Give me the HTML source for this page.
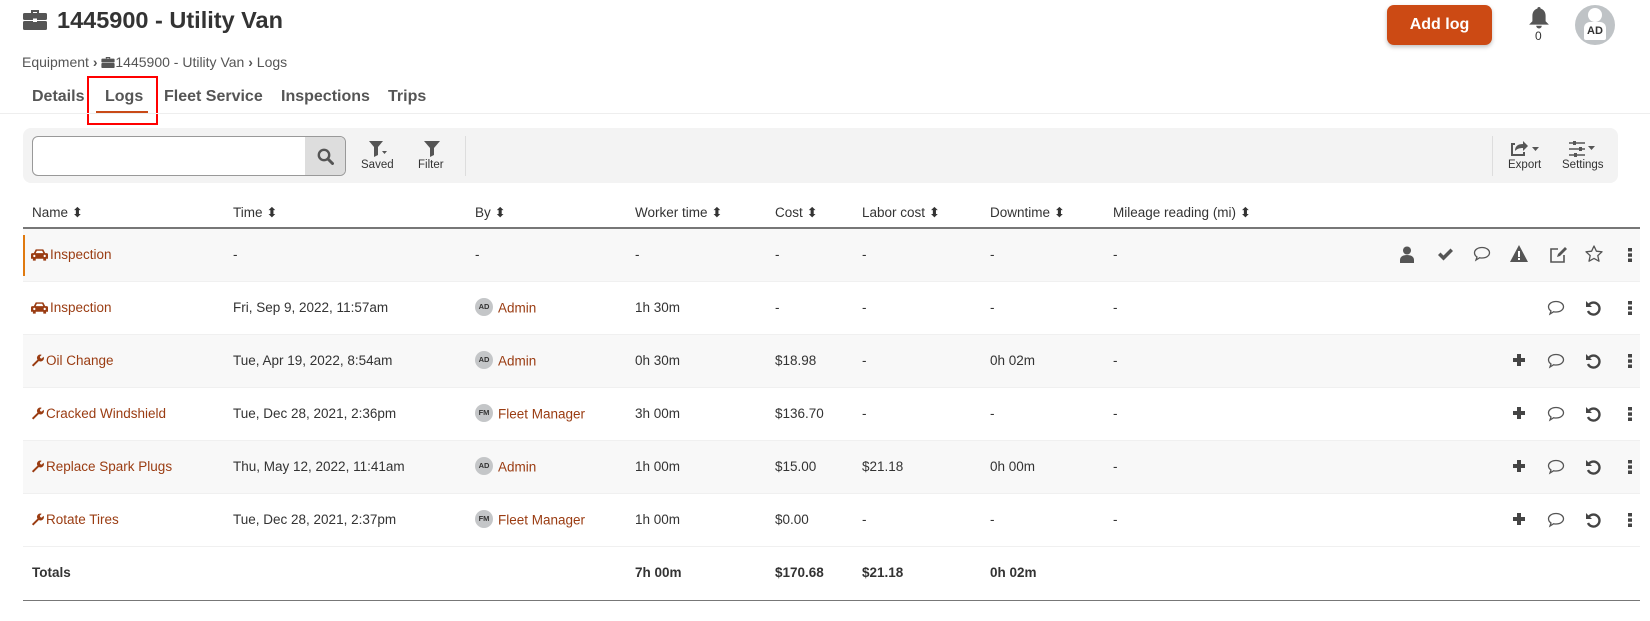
<!DOCTYPE html>
<html><head><meta charset="utf-8"><style>
*{box-sizing:border-box;margin:0;padding:0}
body{width:1650px;height:621px;background:#fff;font-family:"Liberation Sans",Arial,sans-serif;color:#333;position:relative;overflow:hidden}
.a{position:absolute}
.row{position:absolute;left:23px;width:1617px;height:53px;border-bottom:1px solid #f0f0f0}
.row span{position:absolute;top:18px;font-size:13.5px;color:#333;white-space:nowrap}
.row span.l{color:#9a3c12}
.hd span{position:absolute;top:205px;font-size:13.5px;color:#333;white-space:nowrap}
.av{display:inline-block;width:18px;height:18px;border-radius:50%;background:#c4c6c8;color:#333;font-size:7.5px;font-weight:bold;text-align:center;line-height:18px;vertical-align:middle;position:relative;top:-2px;margin-right:5px;font-style:normal}
.ic{position:absolute;top:18px}
.tab{position:absolute;top:88px;font-size:16px;color:#555;font-weight:bold}
</style></head><body>
<!-- title -->
<svg class="a" style="left:23px;top:10px" width="24" height="20" viewBox="0 0 24 20"><path d="M8 0h8v3h-2V2h-4v1H8z" fill="#555"/><rect x="0" y="3" width="24" height="7" rx="1.5" fill="#555"/><rect x="0" y="11" width="24" height="9" rx="1.5" fill="#555"/><rect x="10" y="8.5" width="4" height="3.5" fill="#fff"/></svg>
<div class="a" style="left:57px;top:7px;font-size:23.5px;font-weight:bold;color:#333">1445900 - Utility Van</div>
<div class="a" style="left:1387px;top:5px;width:105px;height:40px;background:#cc4a14;border-radius:7px;color:#fff;font-weight:bold;font-size:16px;text-align:center;line-height:40px;box-shadow:0 2px 4px rgba(0,0,0,.25)">Add log</div>
<svg class="a" style="left:1529px;top:7px" width="20" height="22" viewBox="0 0 18 20"><path d="M9 0c1 0 1.5.7 1.5 1.5C13.5 2.3 15 5 15 8v5l3 3H0l3-3V8c0-3 1.5-5.7 4.5-6.5C7.5.7 8 0 9 0z" fill="#555"/><path d="M6.5 17h5a2.5 2.5 0 0 1-5 0z" fill="#555"/></svg>
<div class="a" style="left:1535px;top:29px;font-size:12px;color:#333">0</div>
<div class="a" style="left:1575px;top:5px;width:40px;height:40px;border-radius:50%;background:#bfc3c6;overflow:hidden">
<div class="a" style="left:13px;top:3px;width:14px;height:14px;border-radius:50%;background:#fff"></div>
<div class="a" style="left:9px;top:17px;width:22px;height:18px;border-radius:6px 6px 2px 2px;background:#fff;font-size:11px;font-weight:bold;color:#333;text-align:center;line-height:18px">AD</div></div>
<!-- breadcrumb -->
<div class="a" style="left:22px;top:54px;font-size:14px;color:#555;white-space:nowrap">Equipment <b style="font-size:14px">&#x203A;</b> <svg width="14" height="11" viewBox="0 0 24 20" style="vertical-align:-1px"><path d="M8 0h8v3h-2V2h-4v1H8z" fill="#555"/><rect y="3" width="24" height="7" rx="1.5" fill="#555"/><rect y="11" width="24" height="9" rx="1.5" fill="#555"/></svg>1445900 - Utility Van <b style="font-size:14px">&#x203A;</b> Logs</div>
<!-- tabs -->
<div class="tab" style="left:32px">Details</div>
<div class="tab" style="left:105px">Logs</div>
<div class="tab" style="left:164px">Fleet Service</div>
<div class="tab" style="left:281px">Inspections</div>
<div class="tab" style="left:388px">Trips</div>
<div class="a" style="left:96px;top:111px;width:52px;height:2px;background:#c94a17"></div>
<div class="a" style="left:87px;top:76px;width:71px;height:49px;border:2px solid #f00"></div>
<div class="a" style="left:0;top:113px;width:1650px;height:1px;background:#eee"></div>
<!-- toolbar -->
<div class="a" style="left:23px;top:128px;width:1595px;height:55px;background:#f3f3f3;border-radius:8px"></div>
<div class="a" style="left:32px;top:136px;width:314px;height:40px;background:#fff;border:1px solid #999;border-radius:6px;overflow:hidden"><div class="a" style="right:0;top:0;width:40px;height:40px;background:#ddd"></div>
<svg class="a" style="right:11px;top:11px" width="17" height="17" viewBox="0 0 17 17"><circle cx="7" cy="7" r="5.2" fill="none" stroke="#555" stroke-width="2.4"/><path d="M11 11l4.5 4.5" stroke="#555" stroke-width="3" stroke-linecap="round"/></svg></div>
<svg class="a" style="left:369px;top:141px" width="19" height="16" viewBox="0 0 19 16"><path d="M0 0h14l-5 6v8l-4 2V6z" fill="#555"/><path d="M13 10h5l-2.5 3z" fill="#555"/></svg>
<div class="a" style="left:361px;top:159px;font-size:11.5px;color:#333">Saved</div>
<svg class="a" style="left:424px;top:141px" width="16" height="16" viewBox="0 0 16 16"><path d="M0 0h16l-6 7v7l-4 2V7z" fill="#555"/></svg>
<div class="a" style="left:418px;top:159px;font-size:11.5px;color:#333">Filter</div>
<div class="a" style="left:465px;top:136px;width:1px;height:40px;background:#ddd"></div>
<div class="a" style="left:1492px;top:136px;width:1px;height:40px;background:#ddd"></div>
<svg class="a" style="left:1509px;top:139px" width="32" height="18" viewBox="0 0 32 18"><path d="M2 4h4v2H4v9h10v-2h2v4H2z" fill="#555"/><path d="M6 12c0-5 3-7 8-7V2l5 5-5 5V9c-4 0-6 1-8 3z" fill="#555"/><path d="M23 8h7l-3.5 4z" fill="#555"/></svg>
<div class="a" style="left:1508px;top:159px;font-size:11.5px;color:#333">Export</div>
<svg class="a" style="left:1569px;top:140px" width="34" height="18" viewBox="0 0 34 18"><path d="M0 3h16M0 9h16M0 15h16" stroke="#555" stroke-width="1.5"/><rect x="4" y="1" width="3" height="4" fill="#555"/><rect x="10" y="7" width="3" height="4" fill="#555"/><rect x="5" y="13" width="3" height="4" fill="#555"/><path d="M19 6h7l-3.5 4z" fill="#555"/></svg>
<div class="a" style="left:1562px;top:159px;font-size:11.5px;color:#333">Settings</div>
<!-- header -->
<div class="hd">
<span style="left:32px">Name &#x2B0D;</span><span style="left:233px">Time &#x2B0D;</span><span style="left:475px">By &#x2B0D;</span><span style="left:635px">Worker time &#x2B0D;</span><span style="left:775px">Cost &#x2B0D;</span><span style="left:862px">Labor cost &#x2B0D;</span><span style="left:990px">Downtime &#x2B0D;</span><span style="left:1113px">Mileage reading (mi) &#x2B0D;</span>
</div>
<div class="a" style="left:23px;top:227px;width:1617px;height:2px;background:#777"></div>

<svg width="0" height="0" style="position:absolute"><defs>
<symbol id="car" viewBox="0 0 18 14"><path d="M3 5l2-4h8l2 4h1.5a1.5 1.5 0 0 1 1.5 1.5V11h-2v2h-3v-2H5v2H2v-2H0V6.5A1.5 1.5 0 0 1 1.5 5z" fill="#9a3c12"/><path d="M5 5l1.2-2.5h5.6L13 5z" fill="#fff"/><circle cx="3.5" cy="8" r="1.2" fill="#fff"/><circle cx="14.5" cy="8" r="1.2" fill="#fff"/></symbol>
<symbol id="wr" viewBox="0 0 14 14"><path d="M1 12l6-6a3.5 3.5 0 0 1 4.5-5L9.5 3l.5 1.5 1.5.5 2-2a3.5 3.5 0 0 1-5 4.5l-6 6z" fill="#9a3c12"/></symbol>
<symbol id="cm" viewBox="0 0 18 16"><path d="M9 1.5c4.3 0 7.5 2.4 7.5 5.3S13.3 12 9 12c-.8 0-1.6-.1-2.3-.3L3 14l1-3C2.5 10 1.5 8.5 1.5 6.8 1.5 3.9 4.7 1.5 9 1.5z" fill="none" stroke="#555" stroke-width="1.3"/></symbol>
<symbol id="un" viewBox="0 0 16 16"><path d="M4 4.5A6 6 0 1 1 3 11" fill="none" stroke="#444" stroke-width="2.4"/><path d="M1 1v6h6z" fill="#444"/></symbol>
<symbol id="pl" viewBox="0 0 14 14"><path d="M5 1h4v4h4v4H9v4H5V9H1V5h4z" fill="#444"/></symbol>
<symbol id="dt" viewBox="0 0 6 16"><rect x="1" y="1" width="4" height="3.5" fill="#444"/><rect x="1" y="6.3" width="4" height="3.5" fill="#444"/><rect x="1" y="11.5" width="4" height="3.5" fill="#444"/></symbol>
</defs></svg>

<!-- row1 -->
<div class="row" style="top:229px;background:#f8f8f8"><div class="a" style="left:0;top:6px;width:2px;height:41px;background:#e07a10"></div>
<svg class="ic" style="left:8px;top:19px" width="17" height="14"><use href="#car"/></svg><span class="l" style="left:27px">Inspection</span>
<span style="left:210px">-</span><span style="left:452px">-</span><span style="left:612px">-</span><span style="left:752px">-</span><span style="left:839px">-</span><span style="left:967px">-</span><span style="left:1090px">-</span>
<svg class="ic" style="left:1377px;top:17px" width="14" height="17" viewBox="0 0 14 17"><circle cx="7" cy="4.5" r="4" fill="#555"/><path d="M0 17v-3c0-3 2.5-5 7-5s7 2 7 5v3z" fill="#555"/></svg>
<svg class="ic" style="left:1414px;top:19px" width="17" height="13" viewBox="0 0 17 13"><path d="M1 7l2.5-2.5L6.5 7.5 13.5.5 16 3 6.5 12.5z" fill="#555"/></svg>
<svg class="ic" style="left:1450px;top:17px" width="18" height="16"><use href="#cm"/></svg>
<svg class="ic" style="left:1487px;top:16px" width="18" height="17" viewBox="0 0 18 17"><path d="M9 0l9 17H0z" fill="#555"/><rect x="8" y="6" width="2" height="6" fill="#fff"/><rect x="8" y="13" width="2" height="2" fill="#fff"/></svg>
<svg class="ic" style="left:1526px;top:17px" width="18" height="17" viewBox="0 0 18 17"><path d="M9 3H2v13h13V9" fill="none" stroke="#555" stroke-width="1.6"/><path d="M8 11l1-3 7-7 2 2-7 7z" fill="#555"/></svg>
<svg class="ic" style="left:1562px;top:16px" width="18" height="18" viewBox="0 0 18 18"><path d="M9 1l2.4 5.2 5.6.6-4.2 3.8 1.2 5.6L9 13.4l-5 2.8 1.2-5.6L1 6.8l5.6-.6z" fill="none" stroke="#555" stroke-width="1.3" stroke-linejoin="round"/></svg>
<svg class="ic" style="left:1604px;top:18px" width="6" height="16"><use href="#dt"/></svg>
</div>
<!-- row2 -->
<div class="row" style="top:282px"><svg class="ic" style="left:8px;top:19px" width="17" height="14"><use href="#car"/></svg><span class="l" style="left:27px">Inspection</span>
<span style="left:210px">Fri, Sep 9, 2022, 11:57am</span><span class="l" style="left:452px"><i class="av">AD</i>Admin</span><span style="left:612px">1h 30m</span><span style="left:752px">-</span><span style="left:839px">-</span><span style="left:967px">-</span><span style="left:1090px">-</span>
<svg class="ic" style="left:1524px" width="18" height="16"><use href="#cm"/></svg><svg class="ic" style="left:1562px" width="16" height="16"><use href="#un"/></svg><svg class="ic" style="left:1604px" width="6" height="16"><use href="#dt"/></svg></div>
<!-- row3 -->
<div class="row" style="top:335px;background:#f8f8f8"><svg class="ic" style="left:8px;top:19px" width="13" height="13"><use href="#wr"/></svg><span class="l" style="left:23px">Oil Change</span>
<span style="left:210px">Tue, Apr 19, 2022, 8:54am</span><span class="l" style="left:452px"><i class="av">AD</i>Admin</span><span style="left:612px">0h 30m</span><span style="left:752px">$18.98</span><span style="left:839px">-</span><span style="left:967px">0h 02m</span><span style="left:1090px">-</span>
<svg class="ic" style="left:1489px" width="14" height="14"><use href="#pl"/></svg><svg class="ic" style="left:1524px" width="18" height="16"><use href="#cm"/></svg><svg class="ic" style="left:1562px" width="16" height="16"><use href="#un"/></svg><svg class="ic" style="left:1604px" width="6" height="16"><use href="#dt"/></svg></div>
<!-- row4 -->
<div class="row" style="top:388px"><svg class="ic" style="left:8px;top:19px" width="13" height="13"><use href="#wr"/></svg><span class="l" style="left:23px">Cracked Windshield</span>
<span style="left:210px">Tue, Dec 28, 2021, 2:36pm</span><span class="l" style="left:452px"><i class="av">FM</i>Fleet Manager</span><span style="left:612px">3h 00m</span><span style="left:752px">$136.70</span><span style="left:839px">-</span><span style="left:967px">-</span><span style="left:1090px">-</span>
<svg class="ic" style="left:1489px" width="14" height="14"><use href="#pl"/></svg><svg class="ic" style="left:1524px" width="18" height="16"><use href="#cm"/></svg><svg class="ic" style="left:1562px" width="16" height="16"><use href="#un"/></svg><svg class="ic" style="left:1604px" width="6" height="16"><use href="#dt"/></svg></div>
<!-- row5 -->
<div class="row" style="top:441px;background:#f8f8f8"><svg class="ic" style="left:8px;top:19px" width="13" height="13"><use href="#wr"/></svg><span class="l" style="left:23px">Replace Spark Plugs</span>
<span style="left:210px">Thu, May 12, 2022, 11:41am</span><span class="l" style="left:452px"><i class="av">AD</i>Admin</span><span style="left:612px">1h 00m</span><span style="left:752px">$15.00</span><span style="left:839px">$21.18</span><span style="left:967px">0h 00m</span><span style="left:1090px">-</span>
<svg class="ic" style="left:1489px" width="14" height="14"><use href="#pl"/></svg><svg class="ic" style="left:1524px" width="18" height="16"><use href="#cm"/></svg><svg class="ic" style="left:1562px" width="16" height="16"><use href="#un"/></svg><svg class="ic" style="left:1604px" width="6" height="16"><use href="#dt"/></svg></div>
<!-- row6 -->
<div class="row" style="top:494px"><svg class="ic" style="left:8px;top:19px" width="13" height="13"><use href="#wr"/></svg><span class="l" style="left:23px">Rotate Tires</span>
<span style="left:210px">Tue, Dec 28, 2021, 2:37pm</span><span class="l" style="left:452px"><i class="av">FM</i>Fleet Manager</span><span style="left:612px">1h 00m</span><span style="left:752px">$0.00</span><span style="left:839px">-</span><span style="left:967px">-</span><span style="left:1090px">-</span>
<svg class="ic" style="left:1489px" width="14" height="14"><use href="#pl"/></svg><svg class="ic" style="left:1524px" width="18" height="16"><use href="#cm"/></svg><svg class="ic" style="left:1562px" width="16" height="16"><use href="#un"/></svg><svg class="ic" style="left:1604px" width="6" height="16"><use href="#dt"/></svg></div>
<!-- totals -->
<div class="row" style="top:547px;border:none;font-weight:bold"><span style="left:9px;font-weight:bold">Totals</span><span style="left:612px;font-weight:bold">7h 00m</span><span style="left:752px;font-weight:bold">$170.68</span><span style="left:839px;font-weight:bold">$21.18</span><span style="left:967px;font-weight:bold">0h 02m</span></div>
<div class="a" style="left:23px;top:600px;width:1617px;height:1px;background:#777"></div>
</body></html>
